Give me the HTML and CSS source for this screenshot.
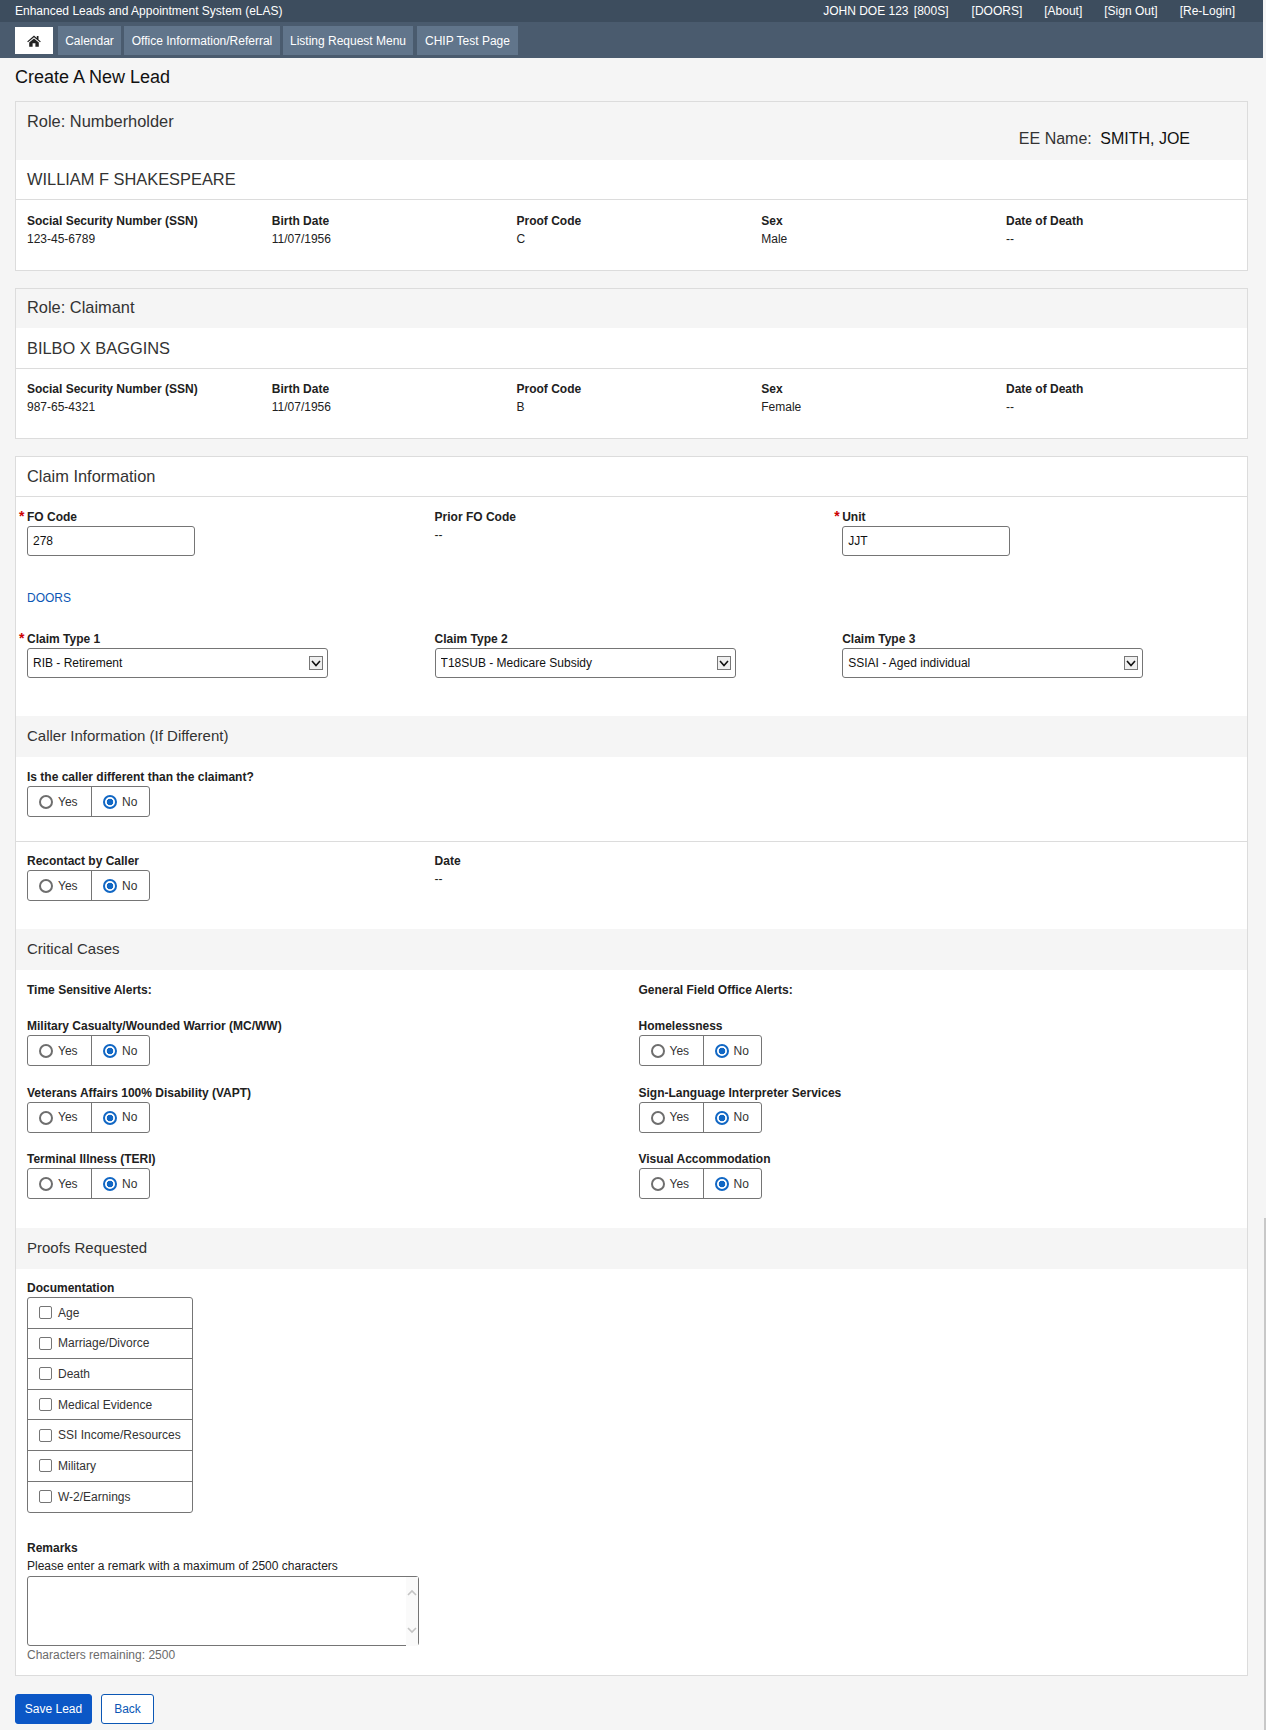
FILE: index.html
```html
<!DOCTYPE html>
<html lang="en">
<head>
<meta charset="utf-8">
<title>Create A New Lead</title>
<link rel="stylesheet" href="styles.css">
</head>
<body>
<div class="scroll-thumb"></div>
<header class="topbar">
  <span class="app-name">Enhanced Leads and Appointment System (eLAS)</span>
  <nav class="user-links">
    <span class="user">JOHN DOE 123 <a class="first-link">[800S]</a></span>
    <a>[DOORS]</a><a>[About]</a><a>[Sign Out]</a><a>[Re-Login]</a>
  </nav>
</header>
<nav class="mainnav">
  <a class="home"><svg width="14" height="12" viewBox="0 0 14 12"><path d="M7 0.6 L0.2 6.4 L1 7.3 L7 2.3 L13 7.3 L13.8 6.4 L11.5 4.4 V1 H9.8 V2.9 Z M7 3.4 L2.2 7.4 V11.8 H5.6 V8.2 H8.4 V11.8 H11.8 V7.4 Z" fill="#222"/></svg></a>
  <a class="tab t1">Calendar</a>
  <a class="tab t2">Office Information/Referral</a>
  <a class="tab t3">Listing Request Menu</a>
  <a class="tab t4">CHIP Test Page</a>
</nav>
<main class="page">
  <h1 class="title">Create A New Lead</h1>

  <section class="panel">
    <div class="role-head tall">
      <span class="role">Role: Numberholder</span>
      <span class="ee"><span class="ee-label">EE Name:</span> SMITH, JOE</span>
    </div>
    <div class="person first">WILLIAM F SHAKESPEARE</div>
    <div class="facts first">
      <div><b>Social Security Number (SSN)</b><span>123-45-6789</span></div>
      <div><b>Birth Date</b><span>11/07/1956</span></div>
      <div><b>Proof Code</b><span>C</span></div>
      <div><b>Sex</b><span>Male</span></div>
      <div><b>Date of Death</b><span>--</span></div>
    </div>
  </section>

  <section class="panel">
    <div class="role-head"><span class="role">Role: Claimant</span></div>
    <div class="person">BILBO X BAGGINS</div>
    <div class="facts">
      <div><b>Social Security Number (SSN)</b><span>987-65-4321</span></div>
      <div><b>Birth Date</b><span>11/07/1956</span></div>
      <div><b>Proof Code</b><span>B</span></div>
      <div><b>Sex</b><span>Female</span></div>
      <div><b>Date of Death</b><span>--</span></div>
    </div>
  </section>

  <section class="panel claim">
    <h2 class="sec-plain">Claim Information</h2>
    <div class="three codes">
      <div class="field"><label class="req">FO Code</label><input class="text" value="278"></div>
      <div class="field"><label>Prior FO Code</label><span>--</span></div>
      <div class="field"><label class="req">Unit</label><input class="text" value="JJT"></div>
    </div>
    <a class="doors">DOORS</a>
    <div class="three types">
      <div class="field"><label class="req">Claim Type 1</label>
        <div class="select-wrap"><select class="select"><option>RIB - Retirement</option></select><svg class="sel-arrow" width="14" height="14" viewBox="0 0 14 14"><rect x=".5" y=".5" width="13" height="13" fill="#efefef" stroke="#777"/><path d="M3 5 L7 9.5 L11 5" fill="none" stroke="#111" stroke-width="1.6"/></svg></div></div>
      <div class="field"><label>Claim Type 2</label>
        <div class="select-wrap"><select class="select"><option>T18SUB - Medicare Subsidy</option></select><svg class="sel-arrow" width="14" height="14" viewBox="0 0 14 14"><rect x=".5" y=".5" width="13" height="13" fill="#efefef" stroke="#777"/><path d="M3 5 L7 9.5 L11 5" fill="none" stroke="#111" stroke-width="1.6"/></svg></div></div>
      <div class="field"><label>Claim Type 3</label>
        <div class="select-wrap"><select class="select"><option>SSIAI - Aged individual</option></select><svg class="sel-arrow" width="14" height="14" viewBox="0 0 14 14"><rect x=".5" y=".5" width="13" height="13" fill="#efefef" stroke="#777"/><path d="M3 5 L7 9.5 L11 5" fill="none" stroke="#111" stroke-width="1.6"/></svg></div></div>
    </div>

    <h2 class="sec">Caller Information (If Different)</h2>
    <div class="caller-a">
      <div class="field"><label>Is the caller different than the claimant?</label>
        <div class="yn"><label><input type="radio" name="r1">Yes</label><label><input type="radio" name="r1" checked>No</label></div></div>
    </div>
    <div class="three caller-b">
      <div class="field"><label>Recontact by Caller</label>
        <div class="yn"><label><input type="radio" name="r2">Yes</label><label><input type="radio" name="r2" checked>No</label></div></div>
      <div class="field"><label>Date</label><span>--</span></div>
    </div>

    <h2 class="sec">Critical Cases</h2>
    <div class="alerts">
      <div class="alert-col">
        <b class="alert-head">Time Sensitive Alerts:</b>
        <div class="field"><label>Military Casualty/Wounded Warrior (MC/WW)</label>
          <div class="yn"><label><input type="radio" name="a1">Yes</label><label><input type="radio" name="a1" checked>No</label></div></div>
        <div class="field"><label>Veterans Affairs 100% Disability (VAPT)</label>
          <div class="yn"><label><input type="radio" name="a2">Yes</label><label><input type="radio" name="a2" checked>No</label></div></div>
        <div class="field"><label>Terminal Illness (TERI)</label>
          <div class="yn"><label><input type="radio" name="a3">Yes</label><label><input type="radio" name="a3" checked>No</label></div></div>
      </div>
      <div class="alert-col">
        <b class="alert-head">General Field Office Alerts:</b>
        <div class="field"><label>Homelessness</label>
          <div class="yn"><label><input type="radio" name="b1">Yes</label><label><input type="radio" name="b1" checked>No</label></div></div>
        <div class="field"><label>Sign-Language Interpreter Services</label>
          <div class="yn"><label><input type="radio" name="b2">Yes</label><label><input type="radio" name="b2" checked>No</label></div></div>
        <div class="field"><label>Visual Accommodation</label>
          <div class="yn"><label><input type="radio" name="b3">Yes</label><label><input type="radio" name="b3" checked>No</label></div></div>
      </div>
    </div>

    <h2 class="sec">Proofs Requested</h2>
    <div class="proofs">
      <div class="field"><label>Documentation</label>
        <div class="checks">
          <label><input type="checkbox">Age</label>
          <label><input type="checkbox">Marriage/Divorce</label>
          <label><input type="checkbox">Death</label>
          <label><input type="checkbox">Medical Evidence</label>
          <label><input type="checkbox">SSI Income/Resources</label>
          <label><input type="checkbox">Military</label>
          <label><input type="checkbox">W-2/Earnings</label>
        </div>
      </div>
      <div class="field remarks"><label>Remarks</label>
        <span class="hint">Please enter a remark with a maximum of 2500 characters</span>
        <div class="area-wrap">
          <textarea class="area"></textarea>
          <div class="area-bar">
            <svg width="10" height="8" viewBox="0 0 10 8"><path d="M1 6 L5 2 L9 6" fill="none" stroke="#c4c4c4" stroke-width="1.6"/></svg>
            <svg width="10" height="8" viewBox="0 0 10 8"><path d="M1 2 L5 6 L9 2" fill="none" stroke="#c4c4c4" stroke-width="1.6"/></svg>
          </div>
        </div>
        <span class="remain">Characters remaining: 2500</span>
      </div>
    </div>
  </section>

  <div class="actions">
    <button class="btn primary">Save Lead</button>
    <button class="btn ghost">Back</button>
  </div>
</main>
</body>
</html>
```
FILE: styles.css
```css
* { box-sizing: border-box; }
html, body { margin: 0; padding: 0; }
body {
  width: 1266px;
  height: 1730px;
  overflow: hidden;
  position: relative;
  background: #f5f5f5;
  font-family: "Liberation Sans", Arial, sans-serif;
  font-size: 12px;
  line-height: 18px;
  color: #212121;
}
.scroll-thumb {
  position: absolute;
  right: 0;
  top: 1218px;
  width: 2px;
  height: 512px;
  background: #c8c8c8;
}
.topbar {
  width: 1263px;
  height: 22px;
  background: #3d4d5e;
  color: #fff;
  display: flex;
  justify-content: space-between;
  align-items: center;
  padding: 0 28px 0 15px;
}
.user-links { display: flex; gap: 22px; }
.user { margin-right: 1px; }
.user a { margin-left: 2px; }
.mainnav {
  width: 1263px;
  height: 36px;
  background: #4a5b6e;
  display: flex;
  align-items: flex-start;
  padding-left: 15px;
}
.home {
  width: 38px;
  height: 27px;
  margin-top: 5px;
  background: #fff;
  display: flex;
  align-items: center;
  justify-content: center;
}
.tab {
  height: 29px;
  margin-top: 4px;
  background: #61758b;
  color: #fff;
  display: flex;
  align-items: center;
  justify-content: center;
}
.t1 { width: 63px; margin-left: 5px; }
.t2 { width: 156px; margin-left: 3px; }
.t3 { width: 130px; margin-left: 3px; }
.t4 { width: 101px; margin-left: 4px; }
.page { width: 1263px; padding: 0 15px; }
.title {
  margin: 0;
  height: 43px;
  padding-top: 6px;
  font-size: 18px;
  line-height: 26px;
  font-weight: 400;
  color: #111;
}
.panel {
  width: 1233px;
  background: #fff;
  border: 1px solid #dcdcdc;
  margin-bottom: 17px;
}
.panel.claim { margin-bottom: 18px; }
.role-head {
  height: 39px;
  background: #f5f5f5;
  padding: 0 11px 3px;
  display: flex;
  align-items: center;
  position: relative;
  font-size: 16.4px;
}
.role-head.tall { height: 58px; align-items: flex-start; padding: 9px 11px 0; justify-content: space-between; }
.role { color: #333; line-height: 20px; }
.ee { margin: 18px 46px 0 0; color: #111; line-height: 20px; font-size: 16px; }
.ee-label { color: #333; margin-right: 4px; }
.person {
  height: 41px;
  padding: 0 11px;
  font-size: 16.4px;
  line-height: 40px;
  border-bottom: 1px solid #dcdcdc;
  color: #333;
}
.person.first { height: 40px; line-height: 39px; }
.facts {
  height: 69px;
  padding: 11px 11px 0;
  display: grid;
  grid-template-columns: repeat(5, 244.75px);
}
.facts.first { height: 70px; padding-top: 12px; }
.facts div { display: flex; flex-direction: column; }
.sec-plain {
  margin: 0;
  height: 40px;
  padding: 0 11px;
  font-size: 16.4px;
  font-weight: 400;
  line-height: 39px;
  color: #333;
  border-bottom: 1px solid #dcdcdc;
}
.sec {
  margin: 0;
  height: 41px;
  padding: 0 11px;
  background: #f5f5f5;
  font-size: 15px;
  font-weight: 400;
  line-height: 40px;
  color: #333;
}
.three {
  display: grid;
  grid-template-columns: repeat(3, 407.6px);
  padding: 0 11px;
}
.field { display: flex; flex-direction: column; align-items: flex-start; }
.field > label { font-weight: 700; line-height: 18px; }
.req { position: relative; }
.req::before {
  content: "*";
  position: absolute;
  left: -8px;
  top: -1px;
  color: #c00;
  font-size: 14px;
}
.codes { padding-top: 11px; height: 86px; }
.text {
  width: 168px;
  height: 30px;
  border: 1px solid #757575;
  border-radius: 3px;
  padding: 0 5px;
  font: 12px "Liberation Sans", Arial, sans-serif;
  color: #111;
  background: #fff;
}
.doors {
  display: block;
  padding: 0 11px;
  margin-top: 6px;
  height: 41px;
  color: #0b57b5;
  line-height: 18px;
}
.types { height: 86px; padding-top: 0; }
.select-wrap { position: relative; width: 301px; height: 30px; }
.select {
  appearance: none;
  width: 301px;
  height: 30px;
  border: 1px solid #757575;
  border-radius: 3px;
  padding: 0 5px;
  background: #fff;
  font: 12px "Liberation Sans", Arial, sans-serif;
  color: #111;
}
.sel-arrow { position: absolute; right: 5px; top: 8px; }
.caller-a { padding: 11px 11px 0; height: 85px; border-bottom: 1px solid #dcdcdc; }
.caller-b { padding-top: 10px; height: 87px; }
.yn {
  display: flex;
  width: 123px;
  height: 31px;
  border: 1px solid #757575;
  border-radius: 3px;
  background: #fff;
}
.yn label { display: flex; align-items: center; padding-left: 11px; color: #333; line-height: 18px; }
.yn label:first-child { width: 64px; border-right: 1px solid #757575; }
.yn label:last-child { flex: 1; }
.yn input {
  appearance: none;
  width: 14px;
  height: 14px;
  margin: 1px 5px 0 0;
  border: 2px solid #6e6e6e;
  border-radius: 50%;
  background: #fff;
}
.yn input:checked {
  border-color: #1167c4;
  background: radial-gradient(circle, #1167c4 0 3px, #fff 3.6px);
}
.alerts {
  display: grid;
  grid-template-columns: 611.5px 1fr;
  padding: 11px 11px 0;
  height: 258px;
}
.alert-col { display: flex; flex-direction: column; align-items: flex-start; }
.alert-head { display: block; height: 36px; }
.alert-col .field { height: 66.5px; }
.proofs { padding: 10px 11px 0; }
.checks {
  width: 166px;
  border: 1px solid #757575;
  border-radius: 3px;
  background: #fff;
}
.checks label {
  display: flex;
  align-items: center;
  height: 30.6px;
  padding-left: 11px;
  color: #333;
  border-bottom: 1px solid #757575;
}
.checks label:last-child { border-bottom: 0; }
.checks input {
  appearance: none;
  width: 13px;
  height: 13px;
  margin: 0 6px 0 0;
  border: 1.5px solid #757575;
  border-radius: 2px;
  background: #fff;
}
.remarks { margin-top: 26px; }
.hint { line-height: 18px; }
.area-wrap { position: relative; width: 392px; height: 70px; margin-top: 1px; }
.area {
  display: block;
  width: 392px;
  height: 70px;
  border: 1px solid #757575;
  border-radius: 3px;
  resize: none;
  background: #fff;
  overflow: hidden;
}
.area-bar {
  position: absolute;
  right: 1px;
  top: 1px;
  bottom: 0;
  width: 12px;
  background: #fafafa;
  display: flex;
  flex-direction: column;
  justify-content: space-between;
  align-items: center;
  padding: 12px 0 12px;
}
.remain { color: #6b6b6b; line-height: 18px; margin-bottom: 11px; }
.actions { display: flex; gap: 9px; }
.btn {
  height: 30px;
  border-radius: 3px;
  font: 12px "Liberation Sans", Arial, sans-serif;
  padding: 0;
}
.primary { width: 77px; background: #0b57c6; border: 1px solid #0b57c6; color: #fff; }
.ghost { width: 53px; background: #fff; border: 1px solid #0b57b5; color: #0b57b5; }
```
